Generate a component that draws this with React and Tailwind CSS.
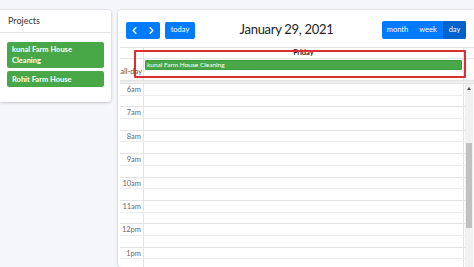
import { ChevronLeft, ChevronRight } from 'lucide-react';

const hours = ['6am', '7am', '8am', '9am', '10am', '11am', '12pm', '1pm'];

export default function App() {
    return (
        <div className="w-[474px] h-[267px] overflow-hidden bg-[#f4f6f9] flex gap-[7px] pt-[10px] font-['Lato','Open_Sans',sans-serif] text-[#212529]">
            {/* Projects card */}
            <div className="w-[111px] h-[92px] shrink-0 bg-white rounded-r-[3px] shadow-[0_0_2px_rgba(0,0,0,0.15),0_1px_3px_rgba(0,0,0,0.15)]">
                <div className="h-[23px] px-[8px] flex items-center border-b border-[#e6e6e6] text-[9px] text-[#333]">
                    Projects
                </div>
                <div className="px-[7px] pt-[9px] flex flex-col gap-[3px]">
                    <div className="bg-[#48a848] rounded-[2px] text-white font-bold text-[7.5px] leading-[11px] px-[5px] py-[2px]">
                        kunal Farm House Cleaning
                    </div>
                    <div className="bg-[#48a848] rounded-[2px] text-white font-bold text-[7.5px] leading-[11px] px-[5px] py-[2.5px]">
                        Rohit Farm House
                    </div>
                </div>
            </div>

            {/* Calendar card */}
            <div className="flex-1 bg-white shadow-[0_0_2px_rgba(0,0,0,0.15),0_1px_3px_rgba(0,0,0,0.15)] rounded-l-[3px] flex flex-col">
                {/* Toolbar */}
                <div className="flex items-center justify-between pl-[8px] pr-[8px] pt-[11px] h-[37px] pb-[8px] box-border">
                    <div className="flex items-center gap-[5px]">
                        <div className="flex h-[17px] rounded-[2px] overflow-hidden bg-[#007bff]">
                            <div className="w-[17px] flex items-center justify-center text-white">
                                <ChevronLeft size={11} strokeWidth={3} />
                            </div>
                            <div className="w-[17px] flex items-center justify-center text-white">
                                <ChevronRight size={11} strokeWidth={3} />
                            </div>
                        </div>
                        <div className="h-[17px] w-[30px] rounded-[2px] bg-[#007bff] text-white text-[7.5px] flex items-center justify-center">
                            today
                        </div>
                    </div>
                    <div className="text-[13px] text-[#222] tracking-[-0.3px] pr-[4px]">January 29, 2021</div>
                    <div className="flex h-[18px] rounded-[2px] overflow-hidden bg-[#007bff] text-white text-[7.5px]">
                        <div className="w-[31px] flex items-center justify-center">month</div>
                        <div className="w-[30px] flex items-center justify-center">week</div>
                        <div className="w-[23px] flex items-center justify-center bg-[#0062cc]">day</div>
                    </div>
                </div>

                {/* Grid */}
                <div className="relative ml-[2px] flex-1 flex flex-col border-t border-[#e3e3e3] overflow-hidden">
                    {/* Header */}
                    <div className="flex h-[11px] border-b border-[#e3e3e3]">
                        <div className="w-[24px] border-r border-[#e3e3e3]" />
                        <div className="w-[320px] border-r border-[#e3e3e3] text-[7.5px] font-bold leading-[10px] text-center">
                            Friday
                        </div>
                        <div className="flex-1" />
                    </div>
                    {/* All-day */}
                    <div className="flex h-[22px] border-b border-[#e3e3e3]">
                        <div className="w-[24px] border-r border-[#e3e3e3] text-[7.5px] text-[#555] flex items-end pb-[3px] justify-end pr-[1px] whitespace-nowrap">
                            all-day
                        </div>
                        <div className="w-[320px] border-r border-[#e3e3e3] pt-[1px] px-[1px]">
                            <div className="h-[10px] bg-[#48a848] border border-[#3f9a3f] text-white text-[6.5px] leading-[8px] pl-[1px] rounded-[1px]">
                                kunal Farm House Cleaning
                            </div>
                        </div>
                        <div className="flex-1" />
                    </div>
                    <div className="h-[3px] bg-[#eeeeee] border-b border-[#e3e3e3]" />

                    {/* Time slots */}
                    <div className="flex flex-1 overflow-hidden">
                        <div className="flex-1 flex flex-col">
                            {hours.map((h) => (
                                <div key={h} className="flex flex-col shrink-0">
                                    <div className="flex h-[11.7px] border-b border-[#ececec]">
                                        <div className="w-[24px] border-r border-[#e3e3e3] text-[7.5px] text-[#666] text-right pr-[2px] leading-[11px]">
                                            {h}
                                        </div>
                                        <div className="w-[320px] border-r border-[#e3e3e3]" />
                                    </div>
                                    <div className="flex h-[11.7px] border-b border-[#e3e3e3]">
                                        <div className="w-[24px] border-r border-[#e3e3e3]" />
                                        <div className="w-[320px] border-r border-[#e3e3e3]" />
                                    </div>
                                </div>
                            ))}
                        </div>
                        {/* Scrollbar */}
                        <div className="w-[8px] mr-[1px] bg-[#f1f1f1] flex flex-col items-center shrink-0">
                            <div className="h-[8px] flex items-center justify-center">
                                <div className="w-0 h-0 border-l-[2.5px] border-r-[2.5px] border-b-[3px] border-l-transparent border-r-transparent border-b-[#505050]" />
                            </div>
                            <div className="w-[6px] h-[85px] mt-[51px] bg-[#c1c1c1]" />
                        </div>
                    </div>

                    {/* Highlight box */}
                    <div className="absolute left-[14px] top-[2px] w-[332px] h-[28px] border-2 border-[#dc2f34] rounded-[1px]" />
                </div>
            </div>
        </div>
    );
}
